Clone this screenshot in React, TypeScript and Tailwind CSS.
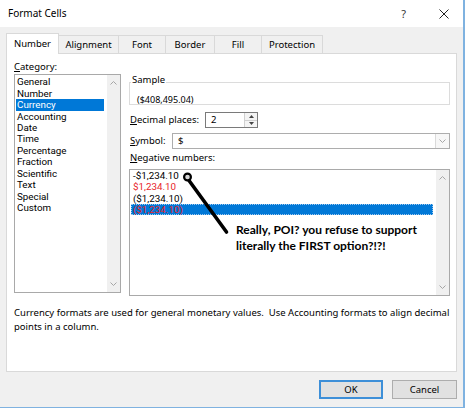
import React from 'react';

const categories = [
  'General',
  'Number',
  'Currency',
  'Accounting',
  'Date',
  'Time',
  'Percentage',
  'Fraction',
  'Scientific',
  'Text',
  'Special',
  'Custom',
];

const tabs = [
  { label: 'Number', w: 'w-[53px]' },
  { label: 'Alignment', w: 'w-[61px]' },
  { label: 'Font', w: 'w-[48px]' },
  { label: 'Border', w: 'w-[50px]' },
  { label: 'Fill', w: 'w-[48px]' },
  { label: 'Protection', w: 'w-[62px]' },
];

function Chevron({ up }: { up?: boolean }) {
  return (
    <svg width="7" height="4" viewBox="0 0 7 4" className="block">
      <path
        d={up ? 'M0.5 3.5 L3.5 0.5 L6.5 3.5' : 'M0.5 0.5 L3.5 3.5 L6.5 0.5'}
        fill="none"
        stroke="#a6a6a6"
        strokeWidth="1"
      />
    </svg>
  );
}

function ScrollTrack() {
  return (
    <div className="flex w-[13px] shrink-0 flex-col items-center justify-between bg-[#f0f0f0] py-[6px]">
      <Chevron up />
      <Chevron />
    </div>
  );
}

const listFont = "font-['Roboto',sans-serif] text-[9.8px]";

export default function App() {
  return (
    <div className="h-[417px] w-[474px] overflow-hidden bg-white font-['Noto_Sans',sans-serif] text-[9.5px] leading-[11.5px] text-black">
      <div className="relative flex h-[408px] w-[465px] flex-col border-r-2 border-b border-[#7fb2e0] bg-[#f0f0f0]">
        {/* Title bar */}
        <div className="flex h-[27px] shrink-0 items-center bg-white pl-[8px]">
          <span className="text-[10px]">Format Cells</span>
          <span className="ml-auto text-[11px] text-[#333]">?</span>
          <svg width="10" height="10" viewBox="0 0 10 10" className="ml-[33px] mr-[14px]">
            <path d="M0.5 0.5 L9.5 9.5 M9.5 0.5 L0.5 9.5" stroke="#222" strokeWidth="1" />
          </svg>
        </div>

        {/* Tabs */}
        <div className="flex h-[26px] shrink-0 items-end pl-[6px]">
          {tabs.map((t, i) => {
            const active = i === 0;
            return (
              <div
                key={t.label}
                className={`${t.w} ${i > 0 ? '-ml-px' : ''} relative flex items-center justify-center border border-b-0 border-[#d9d9d9] ${
                  active ? 'z-10 -mb-px h-[21px] bg-white' : 'h-[18px] bg-[#f0f0f0]'
                }`}
              >
                {t.label}
              </div>
            );
          })}
        </div>

        {/* Panel */}
        <div className="ml-[6px] h-[319px] w-[451px] shrink-0 border border-[#d9d9d9] bg-white pl-[7px] pt-[7px]">
          <div className="flex h-[235px]">
            {/* Category */}
            <div className="flex w-[107px] shrink-0 flex-col">
              <div className="h-[12px] leading-[12px]">
                <span className="underline underline-offset-[1px]">C</span>ategory:
              </div>
              <div className="mt-[1px] flex h-[219px] border border-[#a9a9a9] bg-white">
                <div className={`flex-1 pt-[1.3px] ${listFont}`}>
                  {categories.map((c) => (
                    <div
                      key={c}
                      className={`ml-[1px] h-[11.45px] pl-[1px] leading-[11.45px] ${
                        c === 'Currency' ? 'w-[88px] bg-[#0078d7] text-white' : ''
                      }`}
                    >
                      {c}
                    </div>
                  ))}
                </div>
                <ScrollTrack />
              </div>
            </div>

            {/* Right side */}
            <div className="ml-[8px] flex w-[321px] shrink-0 flex-col">
              <div className="mt-[21px] h-[23px] border border-[#dcdcdc] pl-[1px]">
                <div className="-mt-[9px]">
                  <span className="bg-white px-[1px]">Sample</span>
                </div>
                <div className="mt-[8px] pl-[6px] text-[9px]">($408,495.04)</div>
              </div>

              <div className="mt-[7px] flex h-[16px] items-center pl-[1px]">
                <div className="w-[75px]">
                  <span className="underline underline-offset-[1px]">D</span>ecimal places:
                </div>
                <div className="flex h-[16px] w-[53px] border border-[#7a7a7a] bg-white">
                  <div className="flex-1 pl-[5px] leading-[14px]">2</div>
                  <div className="flex w-[13px] flex-col border-l border-[#d0d0d0]">
                    <div className="flex flex-1 items-center justify-center border-b border-[#d0d0d0] bg-[#f4f4f4]">
                      <svg width="5" height="3" viewBox="0 0 5 3">
                        <path d="M0 3 L2.5 0 L5 3 Z" fill="#444" />
                      </svg>
                    </div>
                    <div className="flex flex-1 items-center justify-center bg-[#f4f4f4]">
                      <svg width="5" height="3" viewBox="0 0 5 3">
                        <path d="M0 0 L2.5 3 L5 0 Z" fill="#444" />
                      </svg>
                    </div>
                  </div>
                </div>
              </div>

              <div className="mt-[5px] flex h-[16px] items-center pl-[1px]">
                <div className="w-[42px]">
                  <span className="underline underline-offset-[1px]">S</span>ymbol:
                </div>
                <div className="flex h-[16px] w-[278px] border border-[#adadad] bg-white">
                  <div className="flex-1 pl-[5px] leading-[14px]">$</div>
                  <div className="flex w-[14px] items-center justify-center border-l border-[#dadada] bg-[#f7f7f7]">
                    <Chevron />
                  </div>
                </div>
              </div>

              <div className="mt-[3px] h-[12px] pl-[1px] leading-[12px]">
                <span className="underline underline-offset-[1px]">N</span>egative numbers:
              </div>

              <div className="mt-[5px] flex h-[127px] border border-[#a9a9a9] bg-white">
                <div className={`flex-1 ${listFont}`}>
                  <div className="h-[11.3px] pl-[3px] leading-[11.3px]">-$1,234.10</div>
                  <div className="h-[11.3px] pl-[3px] leading-[11.3px] text-[#e8242a]">$1,234.10</div>
                  <div className="h-[11.3px] pl-[3px] leading-[11.3px]">($1,234.10)</div>
                  <div className="ml-[1px] h-[11.3px] w-[302px] border border-dotted border-[#9fc8ee] bg-[#0078d7] pl-[1px] leading-[9.3px] text-[#e8242a]">
                    ($1,234.10)
                  </div>
                </div>
                <ScrollTrack />
              </div>
            </div>
          </div>

          <div className="mt-[10px] whitespace-pre leading-[13.5px]">
            {'Currency formats are used for general monetary values.  Use Accounting formats to align decimal'}
            <br />
            {'points in a column.'}
          </div>
        </div>

        {/* Buttons */}
        <div className="flex flex-1 items-start justify-end gap-[9px] pr-[6px] pt-[8px]">
          <button className="flex h-[19px] w-[64px] items-center justify-center border-2 border-[#3d8fd8] bg-[#e1e1e1]">
            OK
          </button>
          <button className="flex h-[19px] w-[65px] items-center justify-center border border-[#adadad] bg-[#e1e1e1]">
            Cancel
          </button>
        </div>

        {/* Annotation drawn over the screenshot */}
        <svg className="pointer-events-none absolute left-0 top-0" width="465" height="408">
          <line x1="189" y1="180.5" x2="226.5" y2="232" stroke="#000" strokeWidth="3.6" strokeLinecap="round" />
          <circle cx="187.5" cy="177" r="3.4" fill="#d8d8d8" stroke="#000" strokeWidth="2.2" />
        </svg>
        <div className="pointer-events-none absolute left-[236px] top-[222px] font-['Lato',sans-serif] text-[12px] font-bold leading-[16px]">
          Really, POI? you refuse to support
          <br />
          literally the FIRST option?!?!
        </div>
      </div>
    </div>
  );
}
